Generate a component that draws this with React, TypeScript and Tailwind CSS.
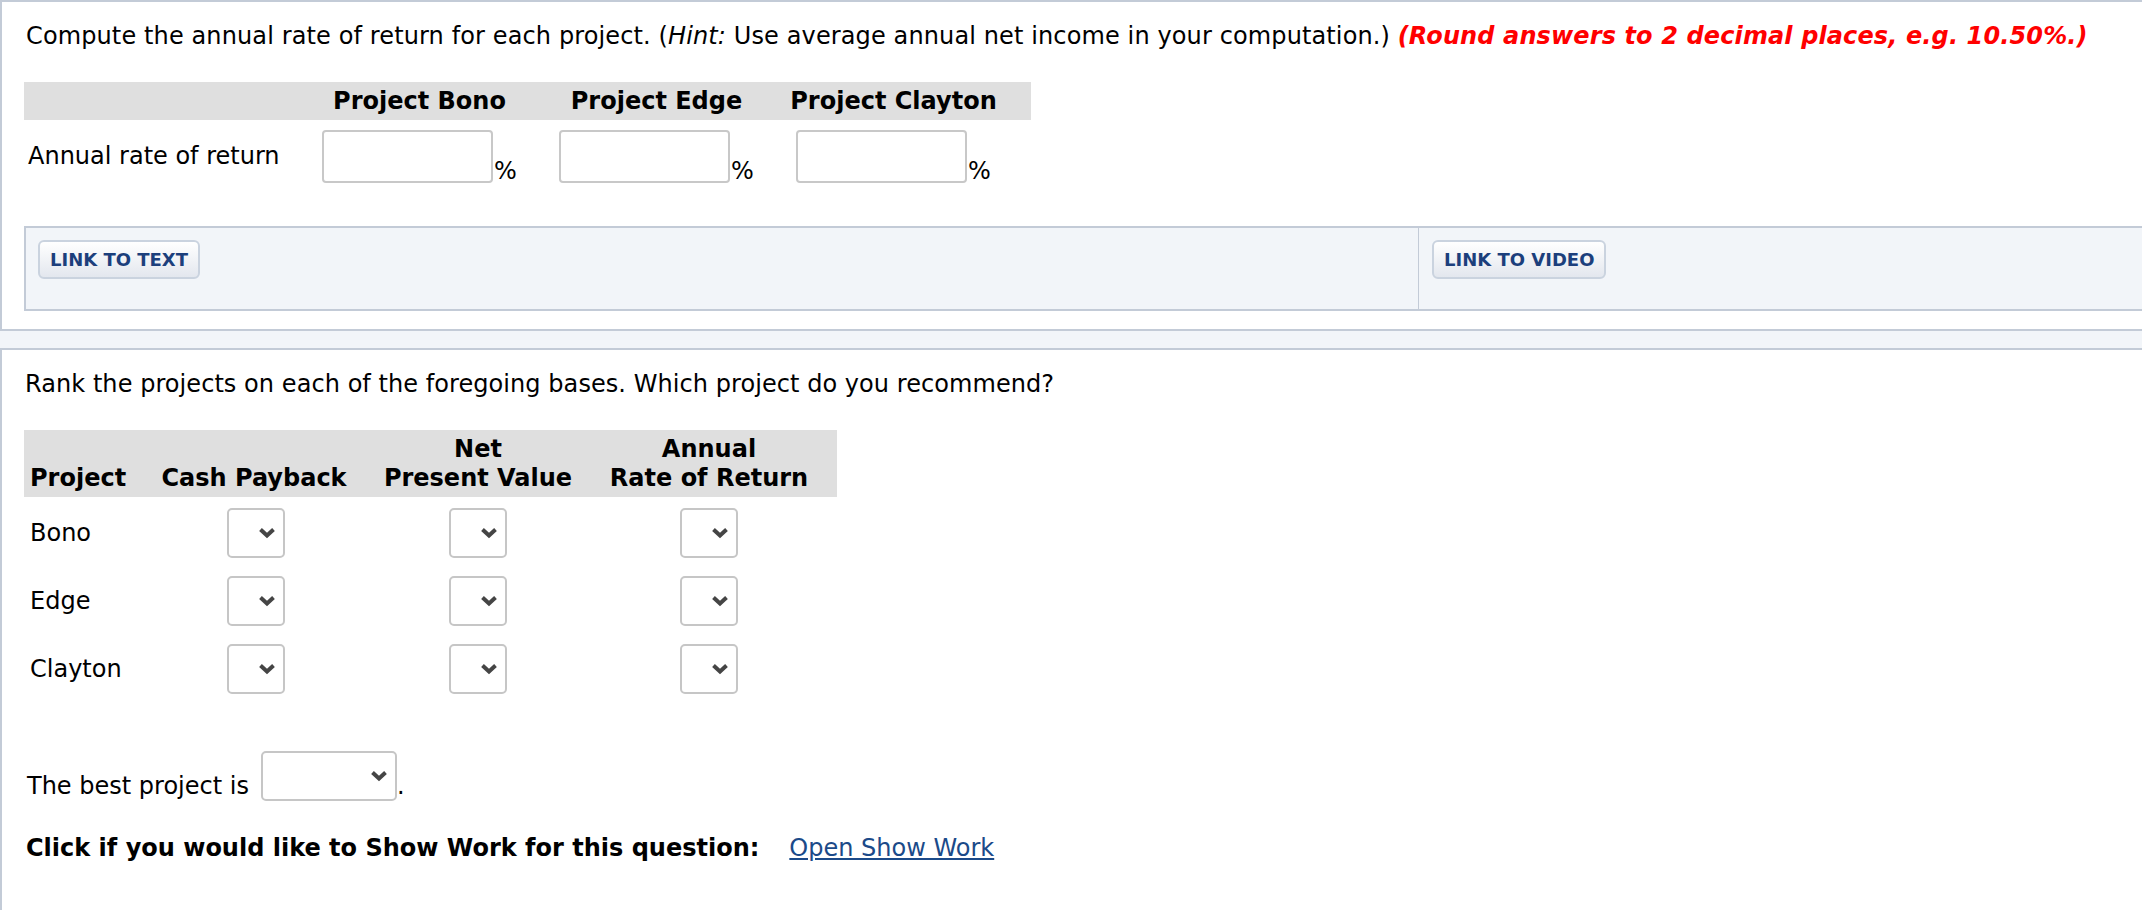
import React from 'react'

function Chevron() {
  return (
    <svg width="18" height="12" viewBox="0 0 18 12" fill="none" stroke="#454545" strokeWidth="4" strokeLinecap="butt">
      <polyline points="2.5,2.5 9,8.5 15.5,2.5" />
    </svg>
  )
}

function Dropdown({ className }: { className: string }) {
  return (
    <div className={`flex h-[50px] items-center justify-end rounded-[5px] border-2 border-[#c6c6c6] bg-white pr-[7px] ${className}`}>
      <Chevron />
    </div>
  )
}

function LinkButton({ label }: { label: string }) {
  return (
    <button className="h-[39px] rounded-[6px] border-2 border-[#cad3df] bg-linear-to-b from-white to-[#e3e7ee] px-[10px] text-[18px] font-bold leading-none text-[#1c3f7c]">
      {label}
    </button>
  )
}

const projects = ['Bono', 'Edge', 'Clayton']

export default function App() {
  return (
    <div className="min-h-[910px] overflow-hidden bg-[#f2f5f9] font-['DejaVu_Sans',Verdana,sans-serif] text-[24px] leading-[29px] text-black">
      {/* annual rate of return */}
      <section className="border-2 border-r-0 border-[#c3cbd7] bg-white pb-[18px] pl-[22px] pt-[20px]">
        <p className="whitespace-nowrap pl-[2px] tracking-[0.12px]">
          Compute the annual rate of return for each project. (<i>Hint:</i> Use average annual net income in your
          computation.){' '}
          <b className="italic text-[#ff0000]">(Round answers to 2 decimal places, e.g. 10.50%.)</b>
        </p>

        <div className="mt-[31px] flex h-[38px] w-[1007px] items-center bg-[#dfdfdf] font-bold">
          <div className="w-[277px]" />
          {projects.map((p) => (
            <div key={p} className="w-[237px] text-center">
              Project {p}
            </div>
          ))}
        </div>

        <div className="mt-[10px] flex h-[53px] items-center">
          <div className="w-[277px] pl-[4px]">Annual rate of return</div>
          {projects.map((p) => (
            <div key={p} className="flex w-[237px] items-end justify-center">
              <input type="text" className="h-[53px] w-[171px] rounded-[4px] border-2 border-[#c8c8c8] bg-white" />
              <span className="-mb-[3px] ml-[1px]">%</span>
            </div>
          ))}
        </div>

        <div className="mt-[43px] flex h-[85px] border-2 border-r-0 border-[#c3cbd7] bg-[#f2f5f9]">
          <div className="w-[1393px] border-r border-[#c3cbd7] pl-[12px] pt-[12px]">
            <LinkButton label="LINK TO TEXT" />
          </div>
          <div className="flex-1 pl-[13px] pt-[12px]">
            <LinkButton label="LINK TO VIDEO" />
          </div>
        </div>
      </section>

      {/* ranking */}
      <section className="mt-[17px] min-h-[562px] border-2 border-b-0 border-r-0 border-[#c3cbd7] bg-white pl-[22px] pt-[20px]">
        <p className="pl-[1px] tracking-[0.06px]">
          Rank the projects on each of the foregoing bases. Which project do you recommend?
        </p>

        <div className="mt-[31px] flex w-[813px] items-end bg-[#dfdfdf] pb-[4px] pt-[5px] font-bold">
          <div className="w-[119px] pl-[6px]">Project</div>
          <div className="w-[222px] text-center">Cash Payback</div>
          <div className="w-[226px] text-center">
            Net
            <br />
            Present Value
          </div>
          <div className="w-[236px] text-center">
            Annual
            <br />
            Rate of Return
          </div>
        </div>

        <div className="mt-[11px] flex flex-col gap-[18px]">
          {projects.map((p) => (
            <div key={p} className="flex h-[50px] items-center">
              <div className="w-[119px] pl-[6px]">{p}</div>
              <div className="flex w-[222px] justify-center pl-[4px]">
                <Dropdown className="w-[58px]" />
              </div>
              <div className="flex w-[226px] justify-center">
                <Dropdown className="w-[58px]" />
              </div>
              <div className="flex w-[236px] justify-center">
                <Dropdown className="w-[58px]" />
              </div>
            </div>
          ))}
        </div>

        <div className="mt-[57px] flex items-end pl-[3px]">
          <span>The best project is</span>
          <Dropdown className="ml-[12px] w-[136px]" />
          <span>.</span>
        </div>

        <p className="mt-[33px] flex pl-[2px]">
          <b>Click if you would like to Show Work for this question:</b>
          <a href="#" className="ml-[30px] text-[#1b4a89] underline">
            Open Show Work
          </a>
        </p>
      </section>
    </div>
  )
}
